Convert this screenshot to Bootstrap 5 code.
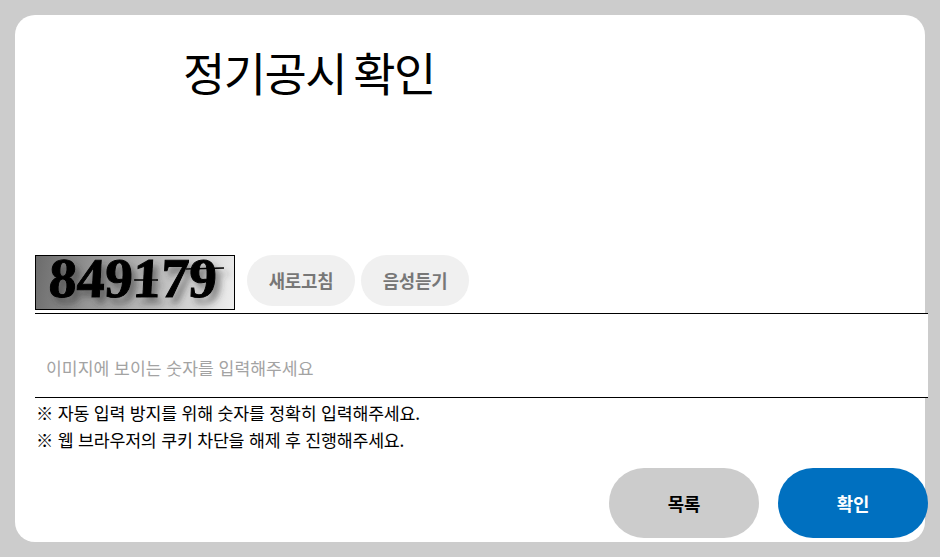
<!DOCTYPE html>
<html lang="ko">
<head>
<meta charset="utf-8">
<title>정기공시 확인</title>
<link href="https://cdn.jsdelivr.net/npm/bootstrap@5.3.0/dist/css/bootstrap.min.css" rel="stylesheet">
<style>
html,body{height:100%;}
body{background:#ccc;font-family:"Noto Sans CJK KR","Noto Sans",sans-serif;color:#000;overflow:hidden;padding:15px;}
.sheet{background:#fff;border-radius:20px;height:527px;padding-left:20px;}
.inner{width:893px;}
.head-title{font-size:46px;font-weight:400;letter-spacing:-1.6px;word-spacing:-4px;line-height:60px;margin:0;padding:26px 0 0 148px;height:240px;}
.capt-row{height:59px;border-bottom:1px solid #000;gap:12px;}
.capt-box{width:200px;height:55px;border:1px solid #000;background:linear-gradient(100deg,#6c6c6c 0%,#979797 30%,#c8c8c8 70%,#eee 100%);}
.capt-box svg{display:block;overflow:visible;}
.pill-gray{width:108px;height:51px;border-radius:26px;background:#f0f0f0;color:#777;font-weight:700;font-size:17.8px;letter-spacing:-.2px;border:0;padding:0;margin-right:-6px;}
.code-input{height:84px;border:0;border-bottom:1px solid #000;border-radius:0;font-size:17.2px;padding:24px 11px 0;width:100%;outline:0;display:block;}
.code-input::placeholder{color:#a3a3a3;opacity:1;}
.note-list{font-size:17.3px;line-height:27px;letter-spacing:-.2px;margin:1px 0 0 1px;}
.act-row{gap:19px;margin-top:15px;}
.act-btn{width:150px;height:70px;border-radius:35px;border:0;font-weight:700;font-size:17.8px;padding:0;}
.act-list{background:#ccc;color:#000;}
.act-ok{background:#0070c0;color:#fff;}
</style>
</head>
<body>
<div class="sheet">
  <div class="inner">
    <h1 class="head-title">정기공시 확인</h1>
    <div class="capt-row d-flex align-items-start">
      <div class="capt-box flex-shrink-0">
        <svg width="198" height="53" viewBox="0 0 198 53" role="img" aria-label="849179">
          <defs><filter id="shade" x="-10%" y="-30%" width="120%" height="170%"><feDropShadow dx="5" dy="6" stdDeviation="3" flood-color="#333" flood-opacity=".5"/></filter></defs>
          <g filter="url(#shade)">
            <text transform="translate(12 41) skewX(-3)" font-family="Liberation Serif" font-weight="700" font-size="56" textLength="168" lengthAdjust="spacing" fill="#000" stroke="#000" stroke-width="1">849179</text>
            <path d="M98 24H122M150 13L188 12" stroke="#000" stroke-width="1.6" fill="none"/>
          </g>
        </svg>
      </div>
      <button type="button" class="btn pill-gray">새로고침</button>
      <button type="button" class="btn pill-gray">음성듣기</button>
    </div>
    <input class="code-input" type="text" placeholder="이미지에 보이는 숫자를 입력해주세요">
    <div class="note-list">
      <div>※ 자동 입력 방지를 위해 숫자를 정확히 입력해주세요.</div>
      <div>※ 웹 브라우저의 쿠키 차단을 해제 후 진행해주세요.</div>
    </div>
    <div class="act-row d-flex justify-content-end">
      <button type="button" class="btn act-btn act-list">목록</button>
      <button type="button" class="btn act-btn act-ok">확인</button>
    </div>
  </div>
</div>
<script src="https://cdn.jsdelivr.net/npm/bootstrap@5.3.0/dist/js/bootstrap.bundle.min.js"></script>
</body>
</html>
